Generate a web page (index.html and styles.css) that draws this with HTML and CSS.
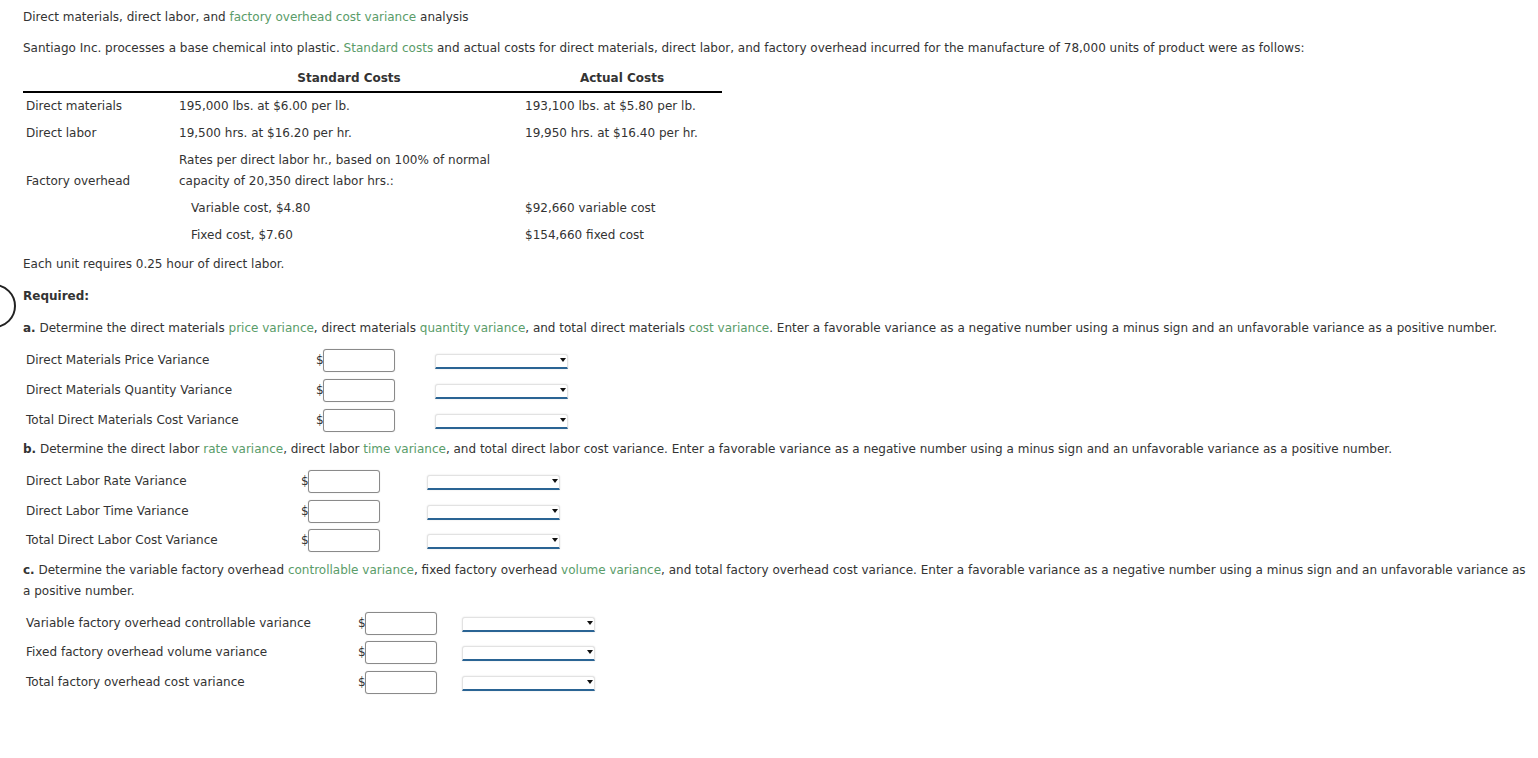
FILE: index.html
```html
<!DOCTYPE html>
<html>
<head>
<meta charset="utf-8">
<link rel="stylesheet" href="styles.css">
</head>
<body>
<div class="page">
  <p class="line title">Direct materials, direct labor, and <span class="term">factory overhead cost variance</span> analysis</p>
  <p class="line intro">Santiago Inc. processes a base chemical into plastic. <span class="term">Standard costs</span> and actual costs for direct materials, direct labor, and factory overhead incurred for the manufacture of 78,000 units of product were as follows:</p>

  <table class="costs">
    <thead>
      <tr>
        <th class="c1"></th>
        <th class="c2">Standard Costs</th>
        <th class="c3">Actual Costs</th>
      </tr>
    </thead>
    <tbody>
      <tr>
        <td>Direct materials</td>
        <td>195,000 lbs. at $6.00 per lb.</td>
        <td>193,100 lbs. at $5.80 per lb.</td>
      </tr>
      <tr>
        <td>Direct labor</td>
        <td>19,500 hrs. at $16.20 per hr.</td>
        <td>19,950 hrs. at $16.40 per hr.</td>
      </tr>
      <tr>
        <td class="bottom">Factory overhead</td>
        <td>Rates per direct labor hr., based on 100% of normal capacity of 20,350 direct labor hrs.:</td>
        <td></td>
      </tr>
      <tr>
        <td></td>
        <td class="indent">Variable cost, $4.80</td>
        <td>$92,660 variable cost</td>
      </tr>
      <tr>
        <td></td>
        <td class="indent">Fixed cost, $7.60</td>
        <td>$154,660 fixed cost</td>
      </tr>
    </tbody>
  </table>

  <p class="line each">Each unit requires 0.25 hour of direct labor.</p>

  <div class="required-wrap">
    <span class="ring"></span>
    <p class="line required"><b>Required:</b></p>
  </div>

  <p class="line question"><b>a.</b> Determine the direct materials <span class="term">price variance</span>, direct materials <span class="term">quantity variance</span>, and total direct materials <span class="term">cost variance</span>. Enter a favorable variance as a negative number using a minus sign and an unfavorable variance as a positive number.</p>

  <div class="answers answers-a">
    <div class="arow">
      <span class="alabel">Direct Materials Price Variance</span>
      <span class="dollar">$</span><span class="inbox"></span><span class="sel"><span class="arrow"></span></span>
    </div>
    <div class="arow">
      <span class="alabel">Direct Materials Quantity Variance</span>
      <span class="dollar">$</span><span class="inbox"></span><span class="sel"><span class="arrow"></span></span>
    </div>
    <div class="arow">
      <span class="alabel">Total Direct Materials Cost Variance</span>
      <span class="dollar">$</span><span class="inbox"></span><span class="sel"><span class="arrow"></span></span>
    </div>
  </div>

  <p class="line question qb"><b>b.</b> Determine the direct labor <span class="term">rate variance</span>, direct labor <span class="term">time variance</span>, and total direct labor cost variance. Enter a favorable variance as a negative number using a minus sign and an unfavorable variance as a positive number.</p>

  <div class="answers answers-b">
    <div class="arow">
      <span class="alabel">Direct Labor Rate Variance</span>
      <span class="dollar">$</span><span class="inbox"></span><span class="sel"><span class="arrow"></span></span>
    </div>
    <div class="arow">
      <span class="alabel">Direct Labor Time Variance</span>
      <span class="dollar">$</span><span class="inbox"></span><span class="sel"><span class="arrow"></span></span>
    </div>
    <div class="arow">
      <span class="alabel">Total Direct Labor Cost Variance</span>
      <span class="dollar">$</span><span class="inbox"></span><span class="sel"><span class="arrow"></span></span>
    </div>
  </div>

  <p class="line question qc"><b>c.</b> Determine the variable factory overhead <span class="term">controllable variance</span>, fixed factory overhead <span class="term">volume variance</span>, and total factory overhead cost variance. Enter a favorable variance as a negative number using a minus sign and an unfavorable variance as a positive number.</p>

  <div class="answers answers-c">
    <div class="arow">
      <span class="alabel">Variable factory overhead controllable variance</span>
      <span class="dollar">$</span><span class="inbox"></span><span class="sel"><span class="arrow"></span></span>
    </div>
    <div class="arow">
      <span class="alabel">Fixed factory overhead volume variance</span>
      <span class="dollar">$</span><span class="inbox"></span><span class="sel"><span class="arrow"></span></span>
    </div>
    <div class="arow">
      <span class="alabel">Total factory overhead cost variance</span>
      <span class="dollar">$</span><span class="inbox"></span><span class="sel"><span class="arrow"></span></span>
    </div>
  </div>
</div>
</body>
</html>
```

FILE: styles.css
```css
html, body {
  margin: 0;
  padding: 0;
  background: #ffffff;
}

body {
  font-family: "DejaVu Sans", Verdana, sans-serif;
  font-size: 12px;
  line-height: 21px;
  color: #333333;
}

.page {
  padding: 7px 8px 0 23px;
}

.line {
  margin: 0;
}

.term {
  color: #5a9c69;
}

.intro {
  margin-top: 10px;
}

.costs {
  margin-top: 9px;
  width: 699px;
  border-collapse: separate;
  border-spacing: 0;
  table-layout: fixed;
}

.costs th {
  font-weight: bold;
  text-align: center;
  padding: 0 0 2px;
  border-bottom: 2px solid #000000;
  line-height: 21px;
}

.costs .c1 { width: 153px; }
.costs .c2 { width: 346px; }
.costs .c3 { width: 200px; }

.costs td {
  padding: 3px 3px;
  text-align: left;
  vertical-align: top;
}

.costs td.bottom {
  vertical-align: bottom;
}

.costs td.indent {
  padding-left: 15px;
}

.each {
  margin-top: 5px;
}

.required-wrap {
  position: relative;
  margin-top: 11px;
}

.ring {
  position: absolute;
  left: -51px;
  top: -2px;
  width: 40px;
  height: 40px;
  border: 2px solid #222222;
  border-radius: 50%;
}

.question {
  margin-top: 11px;
}

.qb, .qc {
  margin-top: 4px;
}

.answers {
  margin-top: 6px;
  padding-left: 3px;
}

.answers-b, .answers-c {
  margin-top: 7px;
}

.arow {
  display: flex;
  align-items: center;
  height: 30px;
}

.answers-b .arow, .answers-c .arow {
  height: 29.5px;
}

.alabel {
  flex: none;
}

.answers-a .alabel { width: 290px; }
.answers-b .alabel { width: 275px; }
.answers-c .alabel { width: 332px; }

.dollar {
  flex: none;
  width: 7px;
  text-align: right;
  color: #333333;
}

.inbox {
  flex: none;
  box-sizing: border-box;
  width: 72px;
  height: 23px;
  border: 1px solid #8a8a8a;
  border-radius: 3px;
  background: #ffffff;
  box-shadow: 0 0 1px rgba(0, 0, 0, 0.25);
}

.sel {
  flex: none;
  position: relative;
  box-sizing: border-box;
  width: 133px;
  height: 15px;
  margin-top: 2px;
  background: #ffffff;
  border: 1px solid #e2e2e2;
  border-bottom: 2px solid #2a6494;
  border-radius: 3px 3px 0 0;
  box-shadow: 0 0 2px rgba(0, 0, 0, 0.12);
}

.answers-a .sel { margin-left: 40px; }
.answers-b .sel { margin-left: 47px; }
.answers-c .sel { margin-left: 25px; }

.arrow {
  position: absolute;
  right: 1px;
  top: 3px;
  width: 0;
  height: 0;
  border-left: 3px solid transparent;
  border-right: 3px solid transparent;
  border-top: 4px solid #111111;
}
```
